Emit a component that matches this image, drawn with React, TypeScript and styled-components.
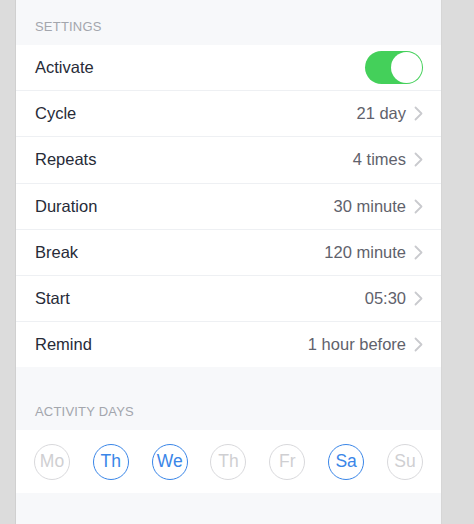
import React from "react";
import styled, { createGlobalStyle } from "styled-components";

const GlobalStyle = createGlobalStyle`
  html, body {
    margin: 0;
    padding: 0;
    background: #dcdcdc;
    font-family: "Liberation Sans", Arial, sans-serif;
    -webkit-font-smoothing: antialiased;
  }
`;

const Page = styled.div`
  display: flex;
  padding-left: 16px;
  min-height: 524px;
`;

const Panel = styled.div`
  width: 425px;
  min-height: 524px;
  background: #f7f8fa;
  box-shadow: -1px 0 0 #d0d0d0, 1px 0 0 #d6d6d6;
  display: flex;
  flex-direction: column;
`;

const SectionLabel = styled.div<{ top: number }>`
  padding: ${(p) => p.top}px 19px 10px;
  font-size: 13px;
  letter-spacing: 0.2px;
  text-transform: uppercase;
  color: #a3a6ad;
  line-height: 16px;
`;

const List = styled.div`
  background: #ffffff;
  display: flex;
  flex-direction: column;
`;

const Row = styled.div`
  height: 46.2px;
  box-sizing: border-box;
  display: flex;
  align-items: center;
  justify-content: space-between;
  padding: 0 18px 0 19px;
  border-top: 1px solid #eef0f3;
  &:first-child {
    border-top: none;
    height: 45.2px;
  }
`;

const Label = styled.span`
  font-size: 16.5px;
  color: #272b38;
`;

const Value = styled.span`
  display: flex;
  align-items: center;
  gap: 8px;
  font-size: 16.5px;
  color: #5f626c;
`;

const Track = styled.div<{ on: boolean }>`
  position: relative;
  width: 58px;
  height: 33px;
  border-radius: 17px;
  background: ${(p) => (p.on ? "#44d05a" : "#e5e5ea")};
`;

const Knob = styled.div<{ on: boolean }>`
  position: absolute;
  top: 1px;
  ${(p) => (p.on ? "right: 1px;" : "left: 1px;")}
  width: 31px;
  height: 31px;
  border-radius: 50%;
  background: #ffffff;
`;

const DayRow = styled.div`
  background: #ffffff;
  height: 63px;
  display: flex;
  align-items: center;
  justify-content: space-between;
  padding: 0 18px;
`;

const Day = styled.div<{ active: boolean }>`
  width: 36px;
  height: 36px;
  box-sizing: border-box;
  border-radius: 50%;
  border: 1.5px solid ${(p) => (p.active ? "#3a86e8" : "#d9d9dc")};
  color: ${(p) => (p.active ? "#3a86e8" : "#cfcfd2")};
  display: flex;
  align-items: center;
  justify-content: center;
  font-size: 17.5px;
`;

const Chevron = () => (
  <svg width="9" height="15" viewBox="0 0 9 15">
    <polyline
      points="1.5,1.5 7.5,7.5 1.5,13.5"
      fill="none"
      stroke="#c9cace"
      strokeWidth="1.8"
      strokeLinecap="round"
      strokeLinejoin="round"
    />
  </svg>
);

const settings = [
  { label: "Cycle", value: "21 day" },
  { label: "Repeats", value: "4 times" },
  { label: "Duration", value: "30 minute" },
  { label: "Break", value: "120 minute" },
  { label: "Start", value: "05:30" },
  { label: "Remind", value: "1 hour before" },
];

const days = [
  { name: "Mo", active: false },
  { name: "Th", active: true },
  { name: "We", active: true },
  { name: "Th", active: false },
  { name: "Fr", active: false },
  { name: "Sa", active: true },
  { name: "Su", active: false },
];

export default function App() {
  const [active, setActive] = React.useState(true);

  return (
    <Page>
      <GlobalStyle />
      <Panel>
        <SectionLabel top={19}>Settings</SectionLabel>
        <List>
          <Row>
            <Label>Activate</Label>
            <Track on={active} onClick={() => setActive(!active)}>
              <Knob on={active} />
            </Track>
          </Row>
          {settings.map((item) => (
            <Row key={item.label}>
              <Label>{item.label}</Label>
              <Value>
                {item.value}
                <Chevron />
              </Value>
            </Row>
          ))}
        </List>
        <SectionLabel top={37}>Activity days</SectionLabel>
        <DayRow>
          {days.map((d, i) => (
            <Day key={i} active={d.active}>
              {d.name}
            </Day>
          ))}
        </DayRow>
      </Panel>
    </Page>
  );
}
